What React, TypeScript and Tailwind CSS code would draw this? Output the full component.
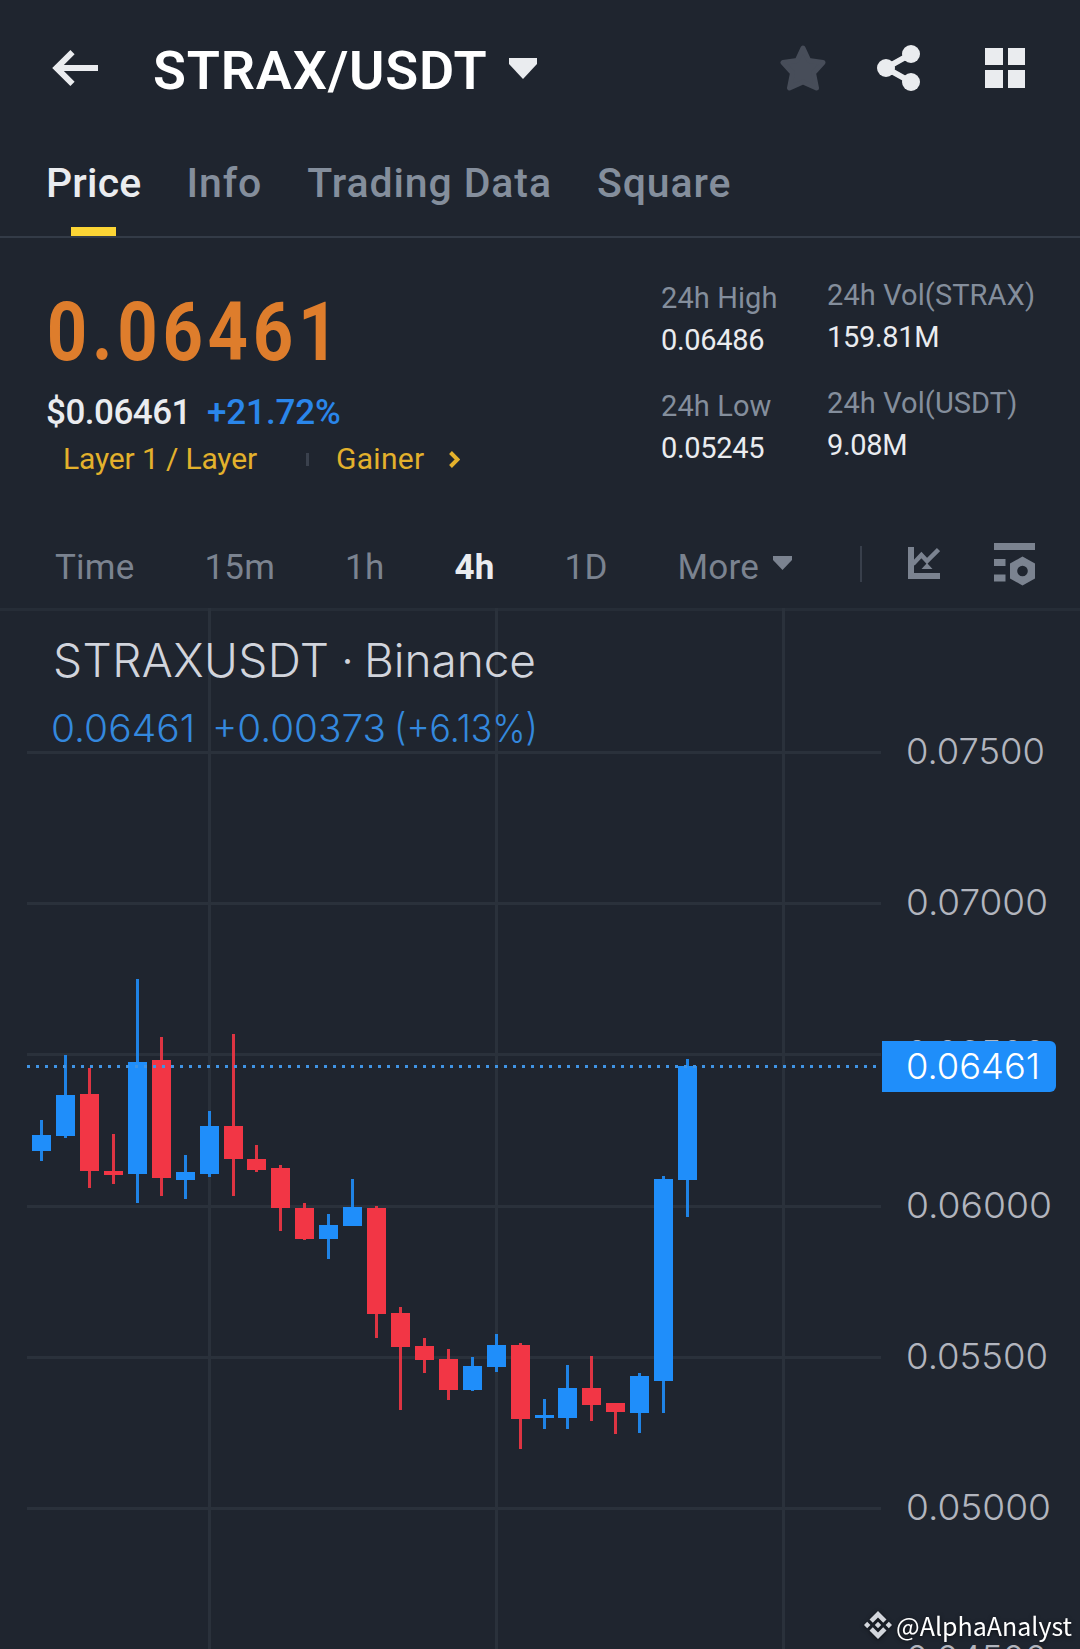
interface Candle {
  x: number;
  high: number;
  top: number;
  bottom: number;
  low: number;
  up: boolean;
}

const UP = "#1f8efa";
const DOWN = "#f23645";

// pixel space of the chart: 608 is the top edge
const candles: Candle[] = [
  { x: 32, high: 1120, top: 1135, bottom: 1151, low: 1161, up: true },
  { x: 56, high: 1055, top: 1095, bottom: 1136, low: 1138, up: true },
  { x: 80, high: 1068, top: 1094, bottom: 1171, low: 1188, up: false },
  { x: 104, high: 1134, top: 1171, bottom: 1175, low: 1184, up: false },
  { x: 128, high: 979, top: 1062, bottom: 1174, low: 1203, up: true },
  { x: 152, high: 1037, top: 1060, bottom: 1178, low: 1196, up: false },
  { x: 176, high: 1155, top: 1172, bottom: 1180, low: 1199, up: true },
  { x: 200, high: 1111, top: 1126, bottom: 1174, low: 1177, up: true },
  { x: 224, high: 1034, top: 1126, bottom: 1159, low: 1196, up: false },
  { x: 247, high: 1145, top: 1159, bottom: 1170, low: 1172, up: false },
  { x: 271, high: 1165, top: 1168, bottom: 1208, low: 1231, up: false },
  { x: 295, high: 1203, top: 1208, bottom: 1239, low: 1240, up: false },
  { x: 319, high: 1214, top: 1225, bottom: 1239, low: 1259, up: true },
  { x: 343, high: 1179, top: 1207, bottom: 1226, low: 1226, up: true },
  { x: 367, high: 1206, top: 1208, bottom: 1314, low: 1338, up: false },
  { x: 391, high: 1307, top: 1313, bottom: 1347, low: 1410, up: false },
  { x: 415, high: 1338, top: 1346, bottom: 1360, low: 1373, up: false },
  { x: 439, high: 1349, top: 1359, bottom: 1390, low: 1400, up: false },
  { x: 463, high: 1357, top: 1366, bottom: 1390, low: 1391, up: true },
  { x: 487, high: 1334, top: 1345, bottom: 1367, low: 1372, up: true },
  { x: 511, high: 1343, top: 1345, bottom: 1419, low: 1449, up: false },
  { x: 535, high: 1399, top: 1415, bottom: 1418, low: 1429, up: true },
  { x: 558, high: 1365, top: 1388, bottom: 1418, low: 1429, up: true },
  { x: 582, high: 1356, top: 1388, bottom: 1405, low: 1421, up: false },
  { x: 606, high: 1403, top: 1403, bottom: 1412, low: 1434, up: false },
  { x: 630, high: 1373, top: 1376, bottom: 1413, low: 1433, up: true },
  { x: 654, high: 1176, top: 1179, bottom: 1381, low: 1413, up: true },
  { x: 678, high: 1059, top: 1066, bottom: 1180, low: 1217, up: true },
];

const priceLevels = [
  { label: "0.07500", y: 752, width: 139 },
  { label: "0.07000", y: 903, width: 142 },
  { label: "0.06500", y: 1054, width: 140 },
  { label: "0.06000", y: 1206, width: 146 },
  { label: "0.05500", y: 1357, width: 142 },
  { label: "0.05000", y: 1508, width: 145 },
  { label: "0.04500", y: 1659, width: 141 },
];

const timeLines = [208, 495, 782];

const tabs = ["Price", "Info", "Trading Data", "Square"];
const intervals = ["Time", "15m", "1h", "4h", "1D"];

const stats = [
  [
    { label: "24h High", value: "0.06486" },
    { label: "24h Low", value: "0.05245" },
  ],
  [
    { label: "24h Vol(STRAX)", value: "159.81M" },
    { label: "24h Vol(USDT)", value: "9.08M" },
  ],
];

const Caret = ({ className }: { className: string }) => (
  <svg viewBox="0 0 28 21" preserveAspectRatio="none" className={className} fill="currentColor">
    <path d="M0 0H28V6L14 21L0 6Z" />
  </svg>
);

const Header = () => (
  <header className="flex h-[137px] items-center pl-[52px] pr-[55px] text-[#eaecef]">
    <svg viewBox="0 0 46 36" className="mb-[1px] h-[36px] w-[46px]" fill="none" stroke="currentColor" strokeWidth="6">
      <path d="M46 18H5M20.500 2.200L4.500 18L20.500 33.800" />
    </svg>
    <h1 className="ml-[55px] mt-[4px] text-[54px] leading-none font-semibold tracking-[0.8px] text-white">
      STRAX/USDT
    </h1>
    <Caret className="ml-[21px] h-[21px] w-[28px]" />
    <div className="mb-[2px] ml-auto flex items-center">
      <svg viewBox="0 0 46 46" className="h-[46px] w-[46px] text-[#474d59]" fill="currentColor" stroke="currentColor" strokeWidth="5" strokeLinejoin="round">
        <path d="M23 3L28.800 15.500L43 17.500L33.500 28L36.500 43L23 37L9.500 43L12.500 28L3 17.500L17.200 15.500Z" />
      </svg>
      <svg viewBox="0 0 43 46" className="ml-[51px] h-[46px] w-[43px]" fill="currentColor">
        <path d="M34 9L9 23L34 37" fill="none" stroke="currentColor" strokeWidth="6" />
        <circle cx="9" cy="23" r="9" />
        <circle cx="34" cy="9" r="9" />
        <circle cx="34" cy="37" r="9" />
      </svg>
      <div className="ml-[65px] grid h-[40px] w-[40px] grid-cols-2 gap-[5px]">
        <i className="bg-[#eaecef]" />
        <i className="bg-[#eaecef]" />
        <i className="bg-[#eaecef]" />
        <i className="bg-[#eaecef]" />
      </div>
    </div>
  </header>
);

const Tabs = () => (
  <nav className="flex h-[101px] gap-[45px] border-b-2 border-[#333b47] pt-[26px] pl-[46px] text-[41px] leading-[40px] font-medium">
    {tabs.map((tab, index) => (
      <div
        key={tab}
        className={`flex flex-col items-center ${
          index === 0 ? "tracking-[0.2px] text-[#eaecef]" : "tracking-[0.9px] text-[#848e9c]"
        }`}>
        <span className="whitespace-nowrap">{tab}</span>
        {index === 0 && <span className="mt-[24px] h-[9px] w-[45px] bg-[#fcd535]" />}
      </div>
    ))}
  </nav>
);

const Summary = () => (
  <section className="flex h-[287px]">
    <div className="w-[661px] pt-[65px] pl-[46px]">
      <div className="origin-left scale-x-[0.86] pl-[1px] text-[82px] leading-[58px] font-bold tracking-[5.5px] text-[#de7d2c]">
        0.06461
      </div>
      <div className="mt-[40px] flex gap-[16px] text-[35px] leading-[24px] font-medium">
        <span className="tracking-[-0.5px] text-[#eaecef]">$0.06461</span>
        <span className="tracking-[-0.1px] text-[#2a86ea]">+21.72%</span>
      </div>
      <div className="mt-[23px] flex items-center pl-[17px] text-[30px] leading-[22px] text-[#e3b12c]">
        <span className="tracking-[-0.15px]">Layer 1 / Layer</span>
        <span className="ml-[49px] h-[13px] w-[3px] bg-[#3a414d]" />
        <span className="ml-[27px] tracking-[0.3px]">Gainer</span>
        <svg viewBox="0 0 11 17" className="ml-[25px] h-[17px] w-[11px]" fill="none" stroke="currentColor" strokeWidth="4">
          <path d="M1.500 1.500L8.500 8.500L1.500 15.500" />
        </svg>
      </div>
    </div>
    <div className="flex">
      {stats.map((column, index) => (
        <div key={index} className={`flex flex-col ${index === 0 ? "w-[166px] pt-[49px]" : "pt-[46px]"}`}>
          {column.map(({ label, value }) => (
            <div key={label} className="mb-[44px] whitespace-nowrap">
              <div className="text-[29px] leading-[22px] tracking-[0.1px] text-[#848e9c]">{label}</div>
              <div className="mt-[21px] text-[29px] leading-[21px] tracking-[-0.3px] text-[#eaecef]">{value}</div>
            </div>
          ))}
        </div>
      ))}
    </div>
  </section>
);

const Intervals = () => (
  <section className="flex h-[83px] items-center pr-[45px] pl-[55px] text-[35px] leading-none text-[#7b8390]">
    <div className="mt-[2px] flex gap-[70px] tracking-[0.2px]">
      {intervals.map((interval) => (
        <span key={interval} className={interval === "4h" ? "font-bold text-[#eaecef]" : ""}>
          {interval}
        </span>
      ))}
      <span className="flex">
        More
        <Caret className="mt-[6px] ml-[14px] h-[14px] w-[19px]" />
      </span>
    </div>
    <span className="mb-[6px] ml-auto h-[36px] w-[2px] bg-[#383f4b]" />
    <svg viewBox="0 0 32 32" className="mb-[7px] ml-[46px] h-[32px] w-[32px]" fill="none" stroke="currentColor" strokeWidth="6">
      <path d="M3 0V29H32" />
      <path d="M5 17L13.400 8L19 14L30.500 2.500" strokeWidth="4.500" />
      <path d="M19 16L24.500 22H13.500Z" fill="currentColor" stroke="none" />
    </svg>
    <svg viewBox="0 0 41 43" className="mb-[4px] ml-[54px] h-[43px] w-[41px]" fill="currentColor">
      <path d="M0 0H41V7H0ZM0 16H11.500V23H0ZM0 31.500H11.500V38.500H0Z" />
      <path fillRule="evenodd" d="M28.500 13.500L41 20.500V35.500L28.500 42.500L16 35.500V20.500ZM28.500 22.700A5.300 5.300 0 1 0 28.500 33.300A5.300 5.300 0 1 0 28.500 22.700Z" />
    </svg>
  </section>
);

const Chart = () => (
  <svg viewBox="0 608 1080 1041" className="block h-[1041px] w-[1080px] font-['Inter',sans-serif] font-light">
    <rect x="0" y="608" width="1080" height="3" fill="#262d37" />
    {priceLevels.map(({ label, y }) => (
      <rect key={label} x="27" y={y - 1} width="854" height="3" fill="#2a313b" />
    ))}
    {timeLines.map((x) => (
      <rect key={x} x={x} y="608" width="3" height="1041" fill="#2a313b" />
    ))}

    {candles.map(({ x, high, top, bottom, low, up }) => (
      <g key={x} fill={up ? UP : DOWN}>
        <rect x={x + 8} y={high} width="3" height={low - high} opacity="0.9" />
        <rect x={x} y={top} width="19" height={bottom - top} />
      </g>
    ))}
    <path d="M27 1066.500H878" stroke="#4094e4" strokeWidth="3" strokeDasharray="3 6" />

    <text x="53" y="677" fontSize="46" fill="#d1d4dc" textLength="276">STRAXUSDT</text>
    <text x="341" y="677" fontSize="46" fill="#d1d4dc">·</text>
    <text x="364" y="677" fontSize="46" fill="#d1d4dc" textLength="172">Binance</text>
    <g fontSize="38" fill="#3488dd">
      <text x="51" y="742" textLength="144" lengthAdjust="spacingAndGlyphs">0.06461</text>
      <text x="212" y="742" textLength="174" lengthAdjust="spacingAndGlyphs">+0.00373</text>
      <text x="394" y="742" textLength="144" lengthAdjust="spacingAndGlyphs">(+6.13%)</text>
    </g>

    <g fontSize="35.500" fill="#b2b5be">
      {priceLevels.map(({ label, y, width }) => (
        <text key={label} x="906" y={y + 12} textLength={width} lengthAdjust="spacingAndGlyphs">
          {label}
        </text>
      ))}
    </g>
    <path d="M882 1041H1050A6 6 0 0 1 1056 1047V1086A6 6 0 0 1 1050 1092H882Z" fill={UP} />
    <text x="906" y="1079" fontSize="35.500" fill="#ffffff" textLength="134" lengthAdjust="spacingAndGlyphs">
      0.06461
    </text>
  </svg>
);

const Watermark = () => (
  <div className="absolute right-[8px] bottom-[9px] flex items-center gap-[4px] text-white drop-shadow-[0_1px_2px_rgba(0,0,0,0.6)]">
    <svg viewBox="0 0 28 28" className="h-[28px] w-[28px] text-[#d3d6dc]" fill="currentColor">
      <path d="M14 0L22.500 8.500L19.200 11.800L14 6.600L8.800 11.800L5.500 8.500Z" />
      <path d="M14 28L5.500 19.500L8.800 16.200L14 21.400L19.200 16.200L22.500 19.500Z" />
      <path d="M3.200 10.800L6.400 14L3.200 17.200L0 14ZM24.800 10.800L28 14L24.800 17.200L21.600 14ZM14 10.800L17.200 14L14 17.200L10.800 14Z" />
    </svg>
    <span className="font-['Noto_Sans_CJK_SC',sans-serif] text-[25px] leading-[30px]">@AlphaAnalyst</span>
  </div>
);

const App = () => {
  return (
    <main className="relative h-[1649px] w-[1080px] overflow-hidden bg-[#1f252f] font-['Roboto',sans-serif]">
      <Header />
      <Tabs />
      <Summary />
      <Intervals />
      <Chart />
      <Watermark />
    </main>
  );
};

export default App;
